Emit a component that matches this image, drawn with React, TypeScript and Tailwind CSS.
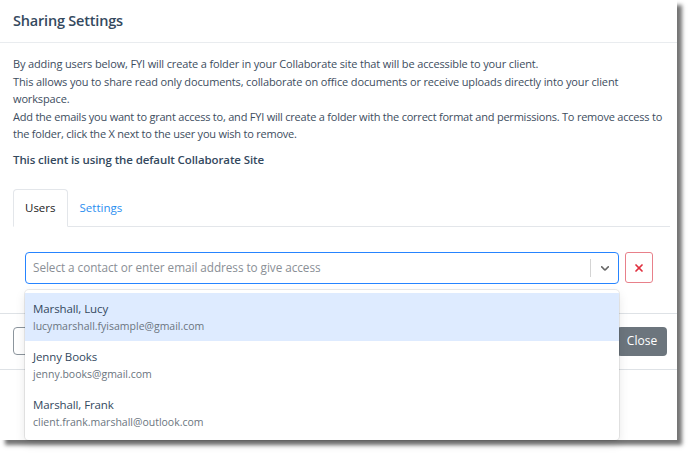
import React from 'react';
import { X } from 'lucide-react';

const contacts = [
  { name: 'Marshall, Lucy', email: 'lucymarshall.fyisample@gmail.com', active: true },
  { name: 'Jenny Books', email: 'jenny.books@gmail.com', active: false },
  { name: 'Marshall, Frank', email: 'client.frank.marshall@outlook.com', active: false },
];

const Chevron = () => (
  <svg width="14" height="14" viewBox="0 0 20 20" fill="#666">
    <path d="M4.516 7.548c0.436-0.446 1.043-0.481 1.576 0l3.908 3.747 3.908-3.747c0.533-0.481 1.141-0.446 1.574 0 0.436 0.445 0.408 1.197 0 1.615-0.406 0.418-4.695 4.502-4.695 4.502-0.217 0.223-0.502 0.335-0.787 0.335s-0.57-0.112-0.789-0.335c0 0-4.287-4.084-4.695-4.502s-0.436-1.17 0-1.615z" />
  </svg>
);

export default function App() {
  return (
    <div className="w-[692px] h-[454px] bg-white relative overflow-hidden font-['Open_Sans',sans-serif] text-[#3d4d5e]">
      {/* screenshot frame */}
      <div className="relative w-[677px] h-[440px] bg-white shadow-[5px_5px_4px_rgba(0,0,0,0.55)]">
        {/* modal */}
        <div className="flex flex-col border-b border-[#dee2e6]">
          <div className="h-[43px] flex items-center px-[13px] border-b border-[#e9ecef]">
            <h2 className="text-[14.5px] font-semibold text-[#34495e] tracking-[-0.2px]">Sharing Settings</h2>
          </div>

          <div className="pl-[13px] pr-[7px] pt-[12px] pb-[29px]">
            <div className="text-[11px] leading-[17.6px] tracking-[-0.14px] whitespace-nowrap">
              <p>By adding users below, FYI will create a folder in your Collaborate site that will be accessible to your client.</p>
              <p>
                This allows you to share read only documents, collaborate on office documents or receive uploads directly into your client
                <br />
                workspace.
              </p>
              <p className="tracking-[-0.22px]">
                Add the emails you want to grant access to, and FYI will create a folder with the correct format and permissions. To remove access to
                <br />
                the folder, click the X next to the user you wish to remove.
              </p>
            </div>
            <p className="mt-[8px] text-[11.5px] leading-[18px] font-semibold text-[#34495e] tracking-[-0.1px]">
              This client is using the default Collaborate Site
            </p>

            <div className="mt-[20px] flex border-b border-[#e3e6ea] text-[11.5px]">
              <div className="h-[38px] -mb-px px-[11px] flex items-center border border-[#e3e6ea] border-b-white rounded-t-[4px] bg-white text-[#222]">
                Users
              </div>
              <div className="h-[37px] px-[12px] flex items-center text-[#2a8ef0]">Settings</div>
            </div>

            <div className="mt-[25px] ml-[12px] flex items-center gap-[6px]">
              <div className="w-[594px] h-[32px] border border-[#2684ff] rounded-[4px] flex items-center bg-white">
                <div className="flex-1 pl-[7px] text-[11.75px] text-[#8a8f96] tracking-[-0.05px]">
                  Select a contact or enter email address to give access
                </div>
                <div className="w-px h-[18px] bg-[#d4d4d4]" />
                <div className="w-[27px] flex justify-center">
                  <Chevron />
                </div>
              </div>
              <div className="w-[28px] h-[31px] border border-[#e8808a] rounded-[3px] flex items-center justify-center">
                <X size={12} strokeWidth={3.5} color="#e0303f" />
              </div>
            </div>
          </div>

          <div className="h-[56px] border-t border-[#dee2e6] flex items-center justify-between pl-[13px] pr-[10px]">
            <div className="h-[28px] px-[12px] flex items-center border border-[#8c959d] rounded-[4px] text-[12px] text-[#6c757d]">
              Cancel
            </div>
            <div className="h-[29px] w-[50px] flex items-center justify-center rounded-[4px] bg-[#6c757d] text-white text-[12px]">
              Close
            </div>
          </div>
        </div>

        {/* dropdown menu */}
        <div className="absolute left-[25px] top-[290px] w-[594px] bg-white rounded-[4px] py-[3px] shadow-[0_0_0_1px_rgba(0,0,0,0.08),0_4px_11px_rgba(0,0,0,0.1)]">
          {contacts.map((c) => (
            <div
              key={c.email}
              className={`h-[48px] px-[8px] flex flex-col justify-center ${c.active ? 'bg-[#deebff]' : ''}`}
            >
              <div className="text-[11.5px] leading-[18px] text-[#34495e] tracking-[-0.1px]">{c.name}</div>
              <div className="text-[10.5px] leading-[16px] text-[#6b7580]">{c.email}</div>
            </div>
          ))}
        </div>
      </div>
    </div>
  );
}
